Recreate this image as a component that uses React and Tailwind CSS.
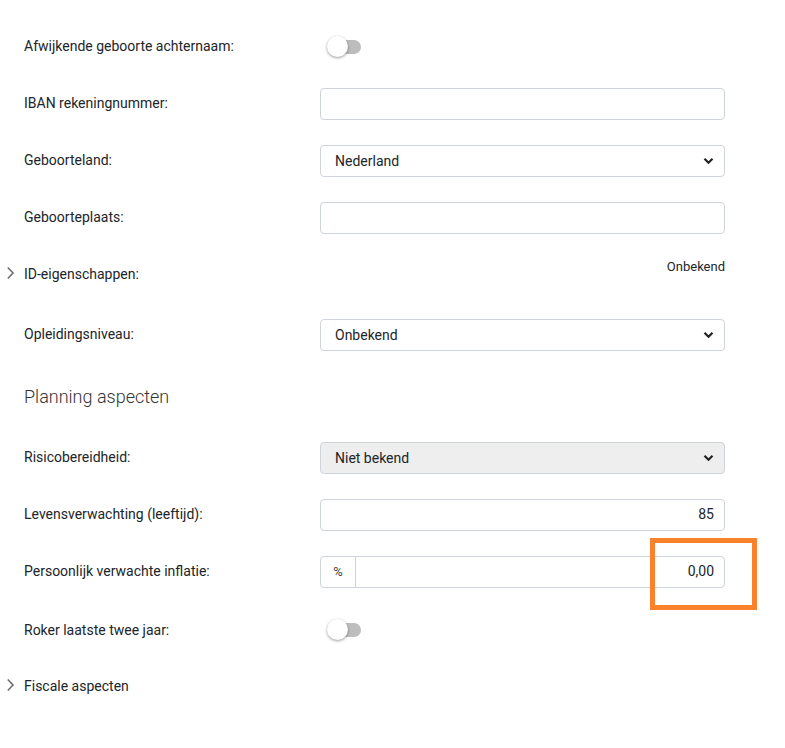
import React from "react";

const font = { fontFamily: "Roboto, 'Noto Sans', sans-serif" };

function Toggle() {
  return (
    <div className="relative w-[38px] h-[22px] flex items-center">
      <div className="absolute left-[14px] w-[22px] h-[14px] rounded-full bg-[#bdbdbd]" />
      <div className="absolute left-[2px] top-0 w-[21px] h-[21px] rounded-full bg-white shadow-[0_1px_3px_rgba(0,0,0,0.4)]" />
    </div>
  );
}

function Chevron() {
  return (
    <svg width="11" height="8" viewBox="0 0 11 8" className="shrink-0">
      <path d="M1.5 1.8 L5.5 5.8 L9.5 1.8" fill="none" stroke="#222" strokeWidth="2.2" />
    </svg>
  );
}

function Select({ value, grey }) {
  return (
    <div
      className={`w-[405px] h-[32px] border border-[#ced4da] rounded-[4px] flex items-center justify-between pl-[14px] pr-[10px] text-[14px] text-[#212529] ${grey ? "bg-[#eeeeee]" : "bg-white"}`}
    >
      <span className="pt-[1px]">{value}</span>
      <Chevron />
    </div>
  );
}

function Input({ value }) {
  return (
    <div className="w-[405px] h-[32px] border border-[#ced4da] rounded-[4px] bg-white flex items-center justify-end pr-[10px] text-[14px] text-[#212529]">
      {value}
    </div>
  );
}

function RightChevron() {
  return (
    <svg width="9" height="14" viewBox="0 0 9 14" className="shrink-0">
      <path d="M1.8 1.5 L7 7 L1.8 12.5" fill="none" stroke="#6f6f6f" strokeWidth="1.6" />
    </svg>
  );
}

function Row({ label, h, children, chevron }) {
  return (
    <div className={`flex items-center ${h}`}>
      <div className="w-[296px] flex items-center text-[14px] text-[#212529] relative">
        {chevron && (
          <div className="absolute left-[-18px] top-[2px]">
            <RightChevron />
          </div>
        )}
        {label}
      </div>
      <div className="flex-1 flex items-center">{children}</div>
    </div>
  );
}

export default function App() {
  return (
    <div className="relative w-[785px] h-[748px] bg-white" style={font}>
      <div className="pl-[24px] pt-[18px] w-[725px] flex flex-col">
        <Row label="Afwijkende geboorte achternaam:" h="h-[57px]">
          <div className="ml-[5px] mt-[1px]"><Toggle /></div>
        </Row>
        <Row label="IBAN rekeningnummer:" h="h-[57px]">
          <Input value="" />
        </Row>
        <Row label="Geboorteland:" h="h-[57px]">
          <Select value="Nederland" />
        </Row>
        <Row label="Geboorteplaats:" h="h-[57px]">
          <Input value="" />
        </Row>
        <Row label="ID-eigenschappen:" h="h-[57px]" chevron>
          <div className="w-[405px] flex justify-end text-[13px] text-[#212529] mb-[15px]">Onbekend</div>
        </Row>
        <Row label="Opleidingsniveau:" h="h-[63px]">
          <Select value="Onbekend" />
        </Row>
        <div className="h-[63px] flex items-center pb-[3px] text-[18px] font-light text-[#333]">
          Planning aspecten
        </div>
        <Row label="Risicobereidheid:" h="h-[57px]">
          <Select value="Niet bekend" grey />
        </Row>
        <Row label="Levensverwachting (leeftijd):" h="h-[57px]">
          <Input value="85" />
        </Row>
        <Row label="Persoonlijk verwachte inflatie:" h="h-[57px]">
          <div className="w-[405px] h-[32px] border border-[#ced4da] rounded-[4px] bg-white flex items-center text-[14px] text-[#212529]">
            <div className="w-[35px] h-full border-r border-[#ced4da] flex items-center justify-center text-[13px] text-[#444]">%</div>
            <div className="flex-1 text-right pr-[10px]">0,00</div>
          </div>
        </Row>
        <Row label="Roker laatste twee jaar:" h="h-[60px]">
          <div className="ml-[5px]"><Toggle /></div>
        </Row>
        <Row label="Fiscale aspecten" h="h-[52px]" chevron>
          <div />
        </Row>
      </div>
      <div className="absolute left-[650px] top-[538px] w-[107px] h-[72px] border-[5px] border-[#fb822c]" />
    </div>
  );
}
